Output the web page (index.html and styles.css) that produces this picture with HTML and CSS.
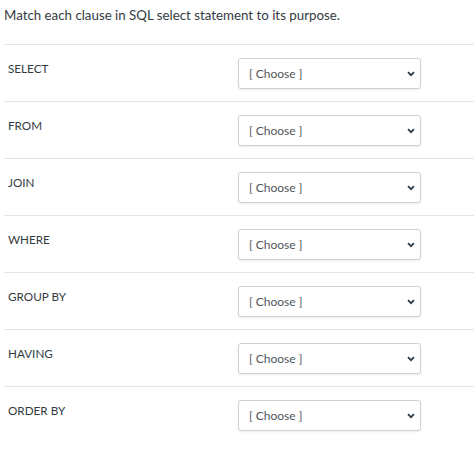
FILE: index.html
```html
<!DOCTYPE html>
<html>
<head>
<meta charset="utf-8">
<link rel="stylesheet" href="styles.css">
</head>
<body>
<div class="question">
  <p class="title">Match each clause in SQL select statement to its purpose.</p>
  <div class="rows">
    <div class="row"><div class="label">SELECT</div><div class="sel"><select><option>[ Choose ]</option></select><svg class="chev" viewBox="0 0 8 6" width="8" height="6"><path d="M1 1.2 L4 4.2 L7 1.2" fill="none" stroke="#2d3b45" stroke-width="1.8"/></svg></div></div>
    <div class="row"><div class="label">FROM</div><div class="sel"><select><option>[ Choose ]</option></select><svg class="chev" viewBox="0 0 8 6" width="8" height="6"><path d="M1 1.2 L4 4.2 L7 1.2" fill="none" stroke="#2d3b45" stroke-width="1.8"/></svg></div></div>
    <div class="row"><div class="label">JOIN</div><div class="sel"><select><option>[ Choose ]</option></select><svg class="chev" viewBox="0 0 8 6" width="8" height="6"><path d="M1 1.2 L4 4.2 L7 1.2" fill="none" stroke="#2d3b45" stroke-width="1.8"/></svg></div></div>
    <div class="row"><div class="label">WHERE</div><div class="sel"><select><option>[ Choose ]</option></select><svg class="chev" viewBox="0 0 8 6" width="8" height="6"><path d="M1 1.2 L4 4.2 L7 1.2" fill="none" stroke="#2d3b45" stroke-width="1.8"/></svg></div></div>
    <div class="row"><div class="label">GROUP BY</div><div class="sel"><select><option>[ Choose ]</option></select><svg class="chev" viewBox="0 0 8 6" width="8" height="6"><path d="M1 1.2 L4 4.2 L7 1.2" fill="none" stroke="#2d3b45" stroke-width="1.8"/></svg></div></div>
    <div class="row"><div class="label">HAVING</div><div class="sel"><select><option>[ Choose ]</option></select><svg class="chev" viewBox="0 0 8 6" width="8" height="6"><path d="M1 1.2 L4 4.2 L7 1.2" fill="none" stroke="#2d3b45" stroke-width="1.8"/></svg></div></div>
    <div class="row"><div class="label">ORDER BY</div><div class="sel"><select><option>[ Choose ]</option></select><svg class="chev" viewBox="0 0 8 6" width="8" height="6"><path d="M1 1.2 L4 4.2 L7 1.2" fill="none" stroke="#2d3b45" stroke-width="1.8"/></svg></div></div>
  </div>
</div>
</body>
</html>
```
FILE: styles.css
```css
html, body {
  margin: 0;
  padding: 0;
  background: #ffffff;
}
body {
  font-family: Lato, "Liberation Sans", sans-serif;
  color: #2d3b45;
}
.question {
  padding-left: 4px;
}
.title {
  margin: 0;
  padding-top: 5px;
  height: 39px;
  font-size: 13.3px;
  line-height: 20px;
  color: #333b42;
}
.row {
  display: grid;
  grid-template-columns: 230px 183px;
  align-items: start;
  border-top: 1px solid #e2e4e6;
  padding: 13px 4px 12px 4px;
}
.label {
  font-size: 11.7px;
  line-height: 16px;
  padding-top: 2px;
  color: #333b42;
}
.sel {
  position: relative;
  height: 31px;
}
.sel select {
  appearance: none;
  -webkit-appearance: none;
  box-sizing: border-box;
  width: 183px;
  height: 31px;
  margin: 0;
  padding: 0 24px 0 10px;
  border: 1px solid #cdd2d6;
  border-radius: 3px;
  background: #ffffff;
  box-shadow: 0 1px 2px rgba(0, 0, 0, 0.08);
  font-family: Lato, "Liberation Sans", sans-serif;
  font-size: 12px;
  color: #4f565c;
}
.chev {
  position: absolute;
  right: 6px;
  top: 13px;
  pointer-events: none;
}
```
